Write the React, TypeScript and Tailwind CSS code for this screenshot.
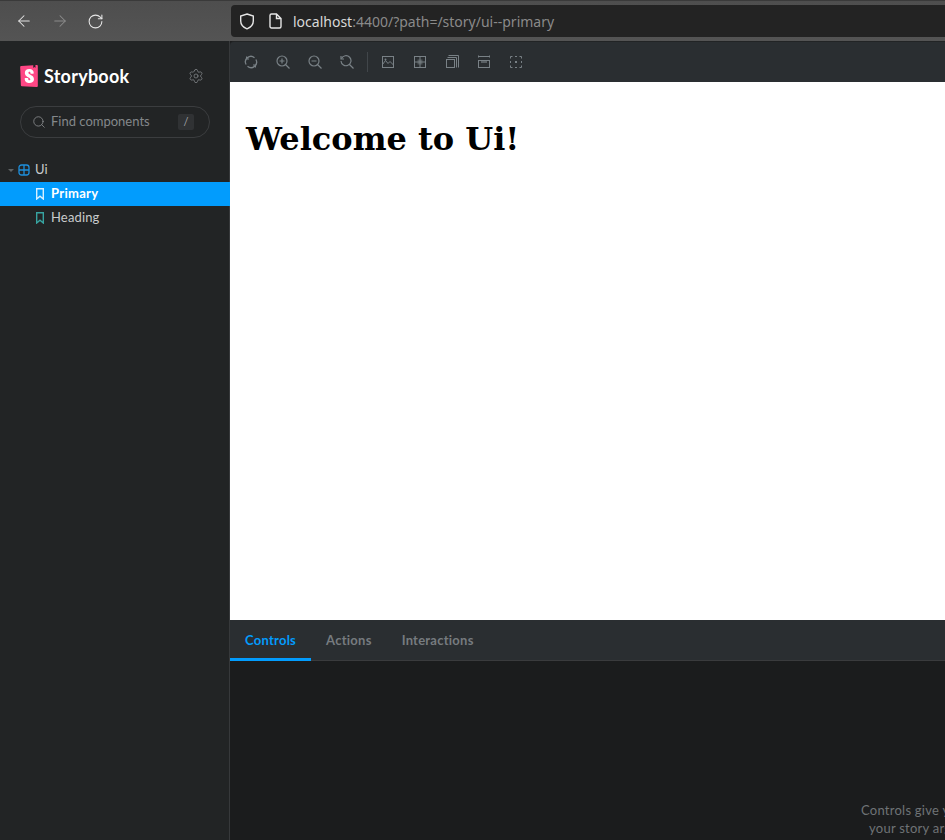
import { ArrowLeft, ArrowRight, RotateCw, Search, Settings } from "lucide-react"
import { SiStorybook } from "react-icons/si"
import type { ReactNode } from "react"

const Tool = ({ children }: { children: ReactNode }) => (
	<button className="flex h-[40px] w-[32px] items-center justify-center text-[#798186]">
		<svg width="14" height="14" viewBox="0 0 14 14" fill="none" stroke="currentColor" strokeWidth="1">
			{children}
		</svg>
	</button>
)

const Bookmark = ({ className }: { className: string }) => (
	<svg className={className} width="10" height="12" viewBox="0 0 10 12" fill="none" stroke="currentColor" strokeWidth="1.4">
		<path d="M1.7.8h6.6v10.2L5 8.2 1.7 11z" />
	</svg>
)

export default function App() {
	return (
		<div className="flex h-[840px] w-[945px] flex-col overflow-hidden bg-[#222425] font-['Lato',sans-serif]">
			<div className="flex h-[41px] shrink-0 items-center border-t border-[#3a3a3a] bg-gradient-to-b from-[#4e4e4e] to-[#545454]">
				<div className="flex w-[231px] shrink-0 items-center pl-[15px]">
					<ArrowLeft size={18} strokeWidth={1.4} className="text-[#e6e6e6]" />
					<ArrowRight size={18} strokeWidth={1.4} className="ml-[18px] text-[#8c8c8c]" />
					<RotateCw size={17} strokeWidth={1.5} className="ml-[18px] text-[#e6e6e6]" />
				</div>
				<div className="flex h-[32px] flex-1 items-center rounded-l-[4px] bg-[#232323] pl-[8px] font-['Noto_Sans',sans-serif] text-[14px]">
					<svg width="16" height="17" viewBox="0 0 16 17" fill="none" stroke="#e6e6e6" strokeWidth="1.4">
						<path d="M8 1l6.3 2v5c0 3.800-2.800 6.400-6.300 7.800C4.500 14.400 1.700 11.800 1.700 8V3z" />
					</svg>
					<svg className="ml-[14px]" width="13" height="16" viewBox="0 0 13 16" fill="none" stroke="#e6e6e6" strokeWidth="1.4">
						<path d="M2.500 1h5l4.500 4.500v8a1.500 1.500 0 0 1-1.500 1.500h-8A1.500 1.500 0 0 1 1 13.500v-11A1.500 1.500 0 0 1 2.500 1zM7.500 1v4.500H12" />
					</svg>
					<span className="ml-[11px] text-[#d8d8d8]">localhost</span>
					<span className="text-[#8a8a8a]">:4400/?path=/story/ui--primary</span>
				</div>
			</div>

			<div className="flex min-h-0 flex-1">
				<aside className="w-[230px] shrink-0 border-r border-[#37393b] bg-[#222425]">
					<div className="flex items-center pl-[20px] pr-[25px] pt-[24px]">
						<div className="relative h-[22px] w-[18px]">
							<div className="absolute inset-[3px] bg-white" />
							<SiStorybook size={22} color="#ff4785" className="absolute left-[-2px] top-0" />
						</div>
						<span className="ml-[6px] text-[18px] font-bold leading-[22px] tracking-[0.25px] text-white">Storybook</span>
						<Settings size={16} strokeWidth={1.2} className="ml-auto text-[#7f8386]" />
					</div>
					<div className="ml-[20px] mr-[19px] mt-[19px] flex h-[32px] items-center rounded-full border border-[#3b3d3f] pl-[11px] pr-[15px]">
						<Search size={14} strokeWidth={1.4} className="text-[#8a8d8f]" />
						<span className="ml-[5px] text-[13px] text-[#84888b]">Find components</span>
						<span className="ml-auto flex h-[16px] w-[16px] items-center justify-center rounded-[2px] bg-[#303234] text-[11px] text-[#a0a3a5]">/</span>
					</div>
					<div className="mt-[20px] text-[13px] tracking-[0.15px]">
						<div className="flex h-[24px] items-center pl-[8px] text-[#c9cbcc]">
							<span className="h-0 w-0 border-x-[3px] border-t-[3px] border-x-transparent border-t-[#5f6365]" />
							<svg className="ml-[4px]" width="12" height="12" viewBox="0 0 12 12" fill="none" stroke="#1e8fdc" strokeWidth="1.300">
								<rect x="1" y="1" width="10" height="10" rx="2.500" />
								<path d="M6 1v10M1 6h10" />
							</svg>
							<span className="ml-[5px]">Ui</span>
						</div>
						<div className="-mr-px flex h-[24px] items-center bg-[#029cfd] pl-[35px] font-bold tracking-[0.3px] text-white">
							<Bookmark className="text-[#d7efff]" />
							<span className="ml-[6px]">Primary</span>
						</div>
						<div className="flex h-[24px] items-center pl-[35px] text-[#c9cbcc]">
							<Bookmark className="text-[#37a3a0]" />
							<span className="ml-[6px]">Heading</span>
						</div>
					</div>
				</aside>

				<main className="flex min-w-0 flex-1 flex-col bg-[#1b1c1d]">
					<div className="flex h-[41px] shrink-0 items-center rounded-tl-[4px] border-t border-[#222425] bg-[#2a2e31] pl-[5px]">
						<Tool>
							<path d="M2.100 9.500A5.500 5.500 0 0 1 10.500 2.700M11.900 4.500A5.500 5.500 0 0 1 3.500 11.300" strokeWidth="1.300" />
							<path d="M2.500 1.500v2.500H5M11.500 12.500v-2.500H9" />
						</Tool>
						<Tool>
							<circle cx="6" cy="6" r="5" strokeWidth="1.200" />
							<path d="M9.500 9.500L13.500 13.500M6 3.500v5M3.500 6h5" strokeWidth="1.200" />
						</Tool>
						<Tool>
							<circle cx="6" cy="6" r="5" strokeWidth="1.200" />
							<path d="M9.500 9.500L13.500 13.500M3.500 6h5" strokeWidth="1.200" />
						</Tool>
						<Tool>
							<path d="M1.500 3.500A5 5 0 1 1 1 6M9.500 9.500L13.500 13.500" strokeWidth="1.200" />
							<path d="M1 1v3h3" strokeWidth="1.200" />
						</Tool>
						<div className="mx-[4px] h-[20px] w-px bg-[#41464a]" />
						<Tool>
							<rect x="1.500" y="1.500" width="11" height="11" />
							<path d="M1.500 9.500l3-4 2.500 3 2-2 3.500 3.500" />
							<circle cx="4.500" cy="4.500" r="1" fill="currentColor" stroke="none" />
						</Tool>
						<Tool>
							<rect x="1.500" y="1.500" width="11" height="11" />
							<path d="M7 1.500v11M1.500 7h11" />
							<rect x="4.500" y="4.500" width="5" height="5" fill="currentColor" stroke="none" opacity="0.5" />
						</Tool>
						<Tool>
							<rect x="1.500" y="4.500" width="8" height="8" />
							<path d="M2.500 2.500h9v10M3.500 .500h10v12" />
						</Tool>
						<Tool>
							<rect x="1.500" y="5.500" width="11" height="7" />
							<path d="M1.500 1.500h11M1.500 .500v2M12.500 .500v2" />
							<rect x="4" y="6" width="6" height="2" fill="currentColor" stroke="none" opacity="0.6" />
						</Tool>
						<Tool>
							<path d="M1.500 3.500v-2h2M6 1.500h2M10.500 1.500h2v2M12.500 6v2M12.500 10.500v2h-2M8 12.500H6M3.500 12.500h-2v-2M1.500 8V6" />
							<rect x="6" y="6" width="2" height="2" fill="currentColor" stroke="none" />
						</Tool>
					</div>
					<div className="h-[538px] shrink-0 bg-white pl-[16px] pt-[34px]">
						<h1 className="whitespace-nowrap font-['DejaVu_Serif',serif] text-[32px] font-bold leading-[46px] text-black">Welcome to Ui!</h1>
					</div>
					<div className="flex h-[41px] shrink-0 bg-[#2a2e31] text-[13px] font-bold tracking-[0.25px] text-[#767b7f] shadow-[inset_0_-1px_0_#3a3b3d]">
						<div className="flex items-center border-b-[3px] border-[#029cfd] px-[15px] pt-[3px] text-[#029cfd]">Controls</div>
						<div className="flex items-center px-[15px]">Actions</div>
						<div className="flex items-center px-[15px]">Interactions</div>
					</div>
					<div className="flex flex-1 flex-col justify-end pb-[3px] pl-[631px]">
						<p className="w-[460px] whitespace-nowrap text-[13px] leading-[18px] tracking-[0.25px] text-[#6f7376]">
							Controls give you an easy to use interface to test your components. Set
							<span className="block pl-[8px]">your story args and you'll see the changes take effect immediately.</span>
						</p>
					</div>
				</main>
			</div>
		</div>
	)
}
